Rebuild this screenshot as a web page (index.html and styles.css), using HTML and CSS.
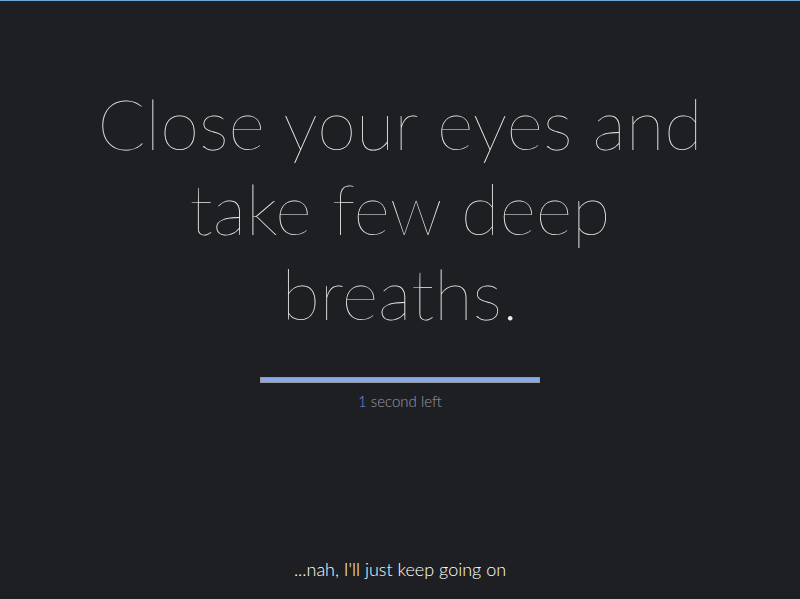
FILE: index.html
```html
<!DOCTYPE html>
<html lang="en">
<head>
<meta charset="utf-8">
<title>Break</title>
<link rel="stylesheet" href="styles.css">
</head>
<body>
<div class="screen">
  <main class="content">
    <h1 class="title">Close your eyes and take few deep breaths.</h1>
    <div class="progress"><div class="progress-fill"></div></div>
    <p class="remaining"><span class="count">1</span> second left</p>
  </main>
  <footer class="footer">
    <a class="skip" href="#">...nah, I'll just keep going on</a>
  </footer>
</div>
</body>
</html>
```
FILE: styles.css
```css
html, body {
  margin: 0;
  padding: 0;
  height: 100%;
}
body {
  background: #1e1f23;
  font-family: Lato, "Open Sans", sans-serif;
  color: #d4d4d4;
}
.screen {
  box-sizing: border-box;
  height: 599px;
  border-top: 1px solid #6fa4dc;
  display: flex;
  flex-direction: column;
  align-items: center;
}
.content {
  display: flex;
  flex-direction: column;
  align-items: center;
  padding-top: 79px;
}
.title {
  margin: 0;
  width: 620px;
  text-align: center;
  font-size: 70.5px;
  font-weight: 100;
  line-height: 85px;
  color: #ececec;
}
.progress {
  margin-top: 42px;
  width: 278px;
  height: 4px;
  border: 1px solid #9a9a9a;
  background: #1e1f23;
}
.progress-fill {
  width: 100%;
  height: 100%;
  background: #86aaea;
}
.remaining {
  margin: 9px 0 0;
  font-size: 15px;
  font-weight: 300;
  color: #9a9ca4;
}
.count {
  color: #7f8ad4;
}
.footer {
  margin-top: auto;
  padding-bottom: 19px;
}
.skip {
  font-size: 18px;
  font-weight: 300;
  color: #ffffff;
  text-decoration: none;
}
```
